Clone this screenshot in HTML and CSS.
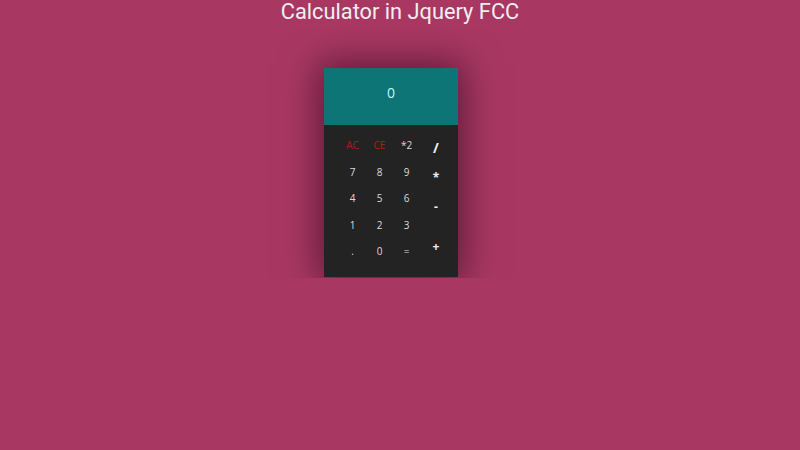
FILE: index.html
```html
<!DOCTYPE html>
<html>
<head>
<meta charset="utf-8">
<link rel="stylesheet" href="styles.css">
</head>
<body>
<h1 class="title">Calculator in Jquery FCC</h1>
<div class="wrap">
  <div class="calc">
    <div class="display">0</div>
    <div class="pad">
      <div class="nums">
        <span class="key red">AC</span><span class="key red">CE</span><span class="key">*2</span>
        <span class="key">7</span><span class="key">8</span><span class="key">9</span>
        <span class="key">4</span><span class="key">5</span><span class="key">6</span>
        <span class="key">1</span><span class="key">2</span><span class="key">3</span>
        <span class="key">.</span><span class="key">0</span><span class="key">=</span>
      </div>
      <div class="ops">
        <span class="op op-div">/</span>
        <span class="op op-mul">*</span>
        <span class="op op-sub">-</span>
        <span class="op op-add">+</span>
      </div>
    </div>
  </div>
</div>
</body>
</html>
```
FILE: styles.css
```css
html, body {
  margin: 0;
  padding: 0;
}
body {
  background: #a83862;
  width: 800px;
  height: 450px;
  overflow: hidden;
  font-family: "Open Sans", "DejaVu Sans", sans-serif;
}
.title {
  margin: 0;
  padding-top: 0;
  height: 28px;
  text-align: center;
  font-family: Roboto, "Liberation Sans", sans-serif;
  font-weight: 400;
  font-size: 21.8px;
  line-height: 24px;
  color: #f2eef0;
}
.wrap {
  margin-left: 264px;
  width: 134px;
  padding: 40px 60px 1px;
  overflow: hidden;
}
.calc {
  width: 134px;
  background: #232323;
  box-shadow: 0 0 34px 6px rgba(40, 0, 25, 0.55);
}
.display {
  height: 57px;
  background: #0e7577;
  color: #c6f6f4;
  font-size: 14px;
  line-height: 50px;
  text-align: center;
}
.pad {
  display: flex;
  padding: 7px 0 12px 15px;
  height: 133px;
  box-sizing: content-box;
}
.nums {
  display: grid;
  grid-template-columns: repeat(3, 27px);
  grid-auto-rows: 26.5px;
}
.key {
  text-align: center;
  font-size: 10px;
  line-height: 26px;
  color: #dcdcdc;
}
.key.red {
  color: #b3191c;
}
.ops {
  display: flex;
  flex-direction: column;
  width: 30px;
  margin-left: 1px;
}
.op {
  text-align: center;
  color: #f0f0f0;
  font-weight: 700;
  font-size: 12px;
  height: 14px;
  line-height: 14px;
}
.op-div {
  margin-top: 9px;
  font-size: 14px;
}
.op-mul {
  margin-top: 16px;
}
.op-sub {
  margin-top: 15px;
}
.op-add {
  margin-top: 26px;
}
```
